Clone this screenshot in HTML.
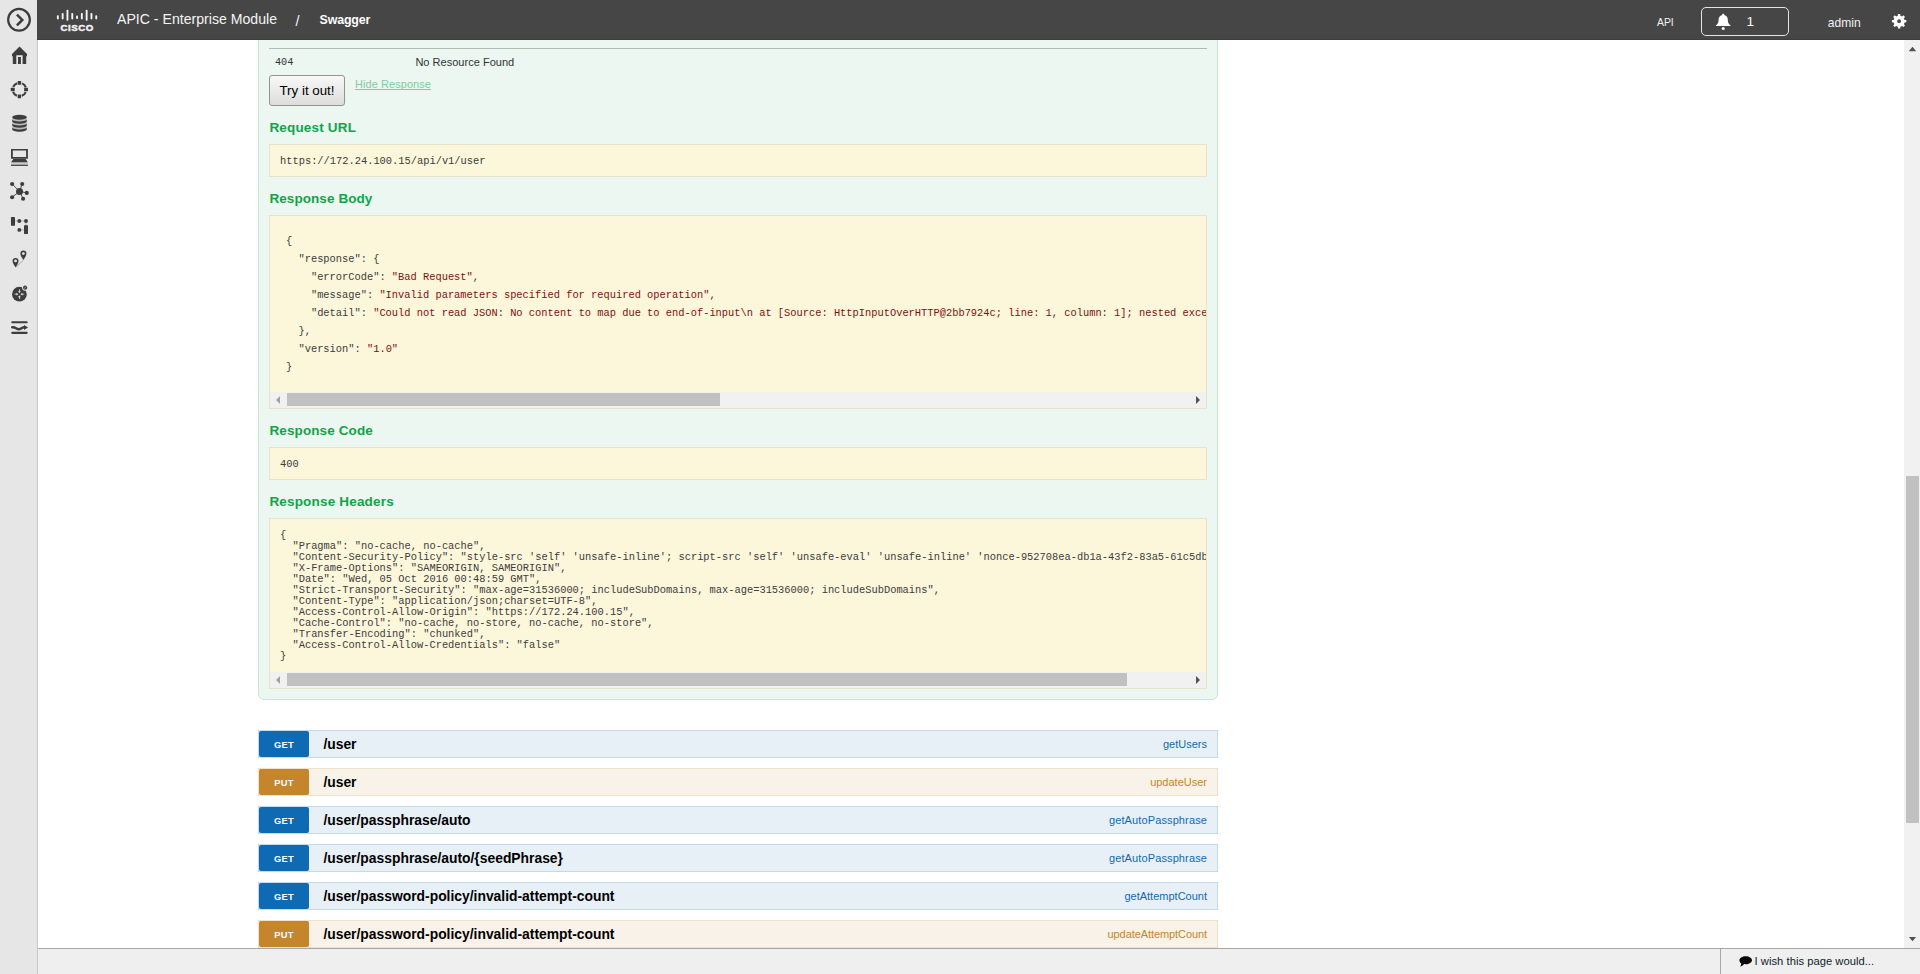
<!DOCTYPE html>
<html lang="en">
<head>
<meta charset="utf-8">
<title>APIC - Enterprise Module / Swagger</title>
<style>
*{box-sizing:border-box}
html,body{margin:0;padding:0}
body{width:1920px;height:974px;overflow:hidden;position:relative;background:#fff;font-family:"Liberation Sans",Arial,sans-serif;color:#000}
.abs{position:absolute}
/* sidebar */
#side{position:absolute;left:0;top:0;width:38px;height:974px;background:#e6e6e6;border-right:1px solid #c8c8c8;z-index:5}
#side svg{position:absolute;left:0;top:0}
/* header */
#hdr{position:absolute;left:37px;top:0;width:1883px;height:40px;background:#464646;border-bottom:1px solid #3e3e3e;z-index:6;color:#fff}
#hdr .t{position:absolute;white-space:nowrap;line-height:1}
/* footer */
#ftr{position:absolute;left:38px;top:948px;width:1882px;height:26px;background:#efefef;border-top:1px solid #a6a6a6;z-index:6}
#wish{position:absolute;left:1682px;top:0;width:199px;height:25px;border-left:1px solid #a6a6a6}
/* scrollbar */
#sb{position:absolute;left:1904px;top:40px;width:16px;height:908px;background:#f1f1f1;z-index:4}
#sb .th{position:absolute;left:2px;top:436px;width:13px;height:347px;background:#c1c1c1}
/* swagger */
.mono{font-family:"Liberation Mono","DejaVu Sans Mono",monospace}
#post{position:absolute;left:258px;top:20px;width:960px;height:680px;background:#ebf7f0;border:1px solid #c8e6d4;border-radius:0 0 6px 6px}
.h4{position:absolute;left:269.4px;color:#10a54a;font-weight:bold;font-size:13.5px;line-height:1;white-space:nowrap}
.box{position:absolute;left:269px;width:938px;background:#fcf6db;border:1px solid #e7e3cb;overflow:hidden}
.box pre{margin:0;position:absolute;white-space:pre;color:#3c3c3c}
.s{color:#801010}
.hs{position:absolute;left:0;height:16px;width:936px;background:#f1f1f1}
.hs .th{position:absolute;top:1px;height:13px;background:#c1c1c1}
.hs i{position:absolute;top:3.6px;width:0;height:0;border:4.2px solid transparent}
.hs i.l{left:1.6px;border-right:4.9px solid #a3a3a3}
.hs i.r{left:925.6px;border-left:4.9px solid #505050}
/* operations */
.op{position:absolute;left:258px;width:960px;height:28px;border:1px solid #c3d9ec;background:#e7f0f7}
.op.put{border-color:#f0e0ca;background:#f9f2e9}
.op .m{position:absolute;left:0;top:0;width:50px;height:26px;background:#0f6ab4;color:#fff;border-radius:2px;text-align:center;font-weight:bold;font-size:9.3px;letter-spacing:0.3px;line-height:29px;overflow:hidden}
.op.put .m{background:#c5862b}
.op .p{position:absolute;left:64.4px;top:0;line-height:26px;font-size:13.87px;font-weight:bold;color:#000;white-space:nowrap}
.op .o{position:absolute;right:10px;top:0;line-height:26px;font-size:11px;color:#0f6ab4;white-space:nowrap}
.op.put .o{color:#c5862b}
</style>
</head>
<body>

<!-- SWAGGER CONTENT -->
<div id="post"></div>
<div class="abs" style="left:269px;top:48px;width:938px;height:1px;background:#b0bcb5"></div>
<div class="abs mono" style="left:275px;top:56px;font-size:10.2px;line-height:13px;color:#333">404</div>
<div class="abs" style="left:415.4px;top:56px;font-size:11.05px;line-height:13px;color:#333;white-space:nowrap">No Resource Found</div>

<div class="abs" id="try" style="left:269px;top:75px;width:76px;height:31px;border:1px solid #939393;border-radius:3px;background:linear-gradient(#f8f8f8,#dddddd);font-size:13.33px;line-height:29px;text-align:center;color:#000">Try it out!</div>
<div class="abs" id="hide" style="left:355px;top:78px;font-size:10.9px;letter-spacing:0.12px;line-height:12px;color:#7fcba4;text-decoration:underline;text-decoration-skip-ink:none;white-space:nowrap">Hide Response</div>

<div class="h4" style="top:121px;letter-spacing:0.18px">Request URL</div>
<div class="box" style="top:144px;height:33px"><pre class="mono" style="left:10px;top:10px;font-size:10.395px;line-height:13px">https://172.24.100.15/api/v1/user</pre></div>

<div class="h4" style="top:192px;letter-spacing:0.08px">Response Body</div>
<div class="box" id="rb" style="top:215px;height:194px"><pre class="mono" style="left:16px;top:16px;font-size:10.395px;line-height:18px">{
  "response": {
    "errorCode": <span class="s">"Bad Request"</span>,
    "message": <span class="s">"Invalid parameters specified for required operation"</span>,
    "detail": <span class="s">"Could not read JSON: No content to map due to end-of-input\n at [Source: HttpInputOverHTTP@2bb7924c; line: 1, column: 1]; nested exception is com.fasterxml.jackson.databind.JsonMappingException"</span>
  },
  "version": <span class="s">"1.0"</span>
}</pre>
<div class="hs" style="top:176px"><i class="l"></i><div class="th" style="left:17px;width:433px"></div><i class="r"></i></div>
</div>

<div class="h4" style="top:424px;letter-spacing:0.12px">Response Code</div>
<div class="box" style="top:447px;height:33px"><pre class="mono" style="left:10px;top:10px;font-size:10.395px;line-height:13px">400</pre></div>

<div class="h4" style="top:495px;letter-spacing:0.18px">Response Headers</div>
<div class="box" id="rh" style="top:518px;height:171px"><pre class="mono" style="left:10px;top:11px;font-size:10.395px;line-height:11px">{
  "Pragma": "no-cache, no-cache",
  "Content-Security-Policy": "style-src 'self' 'unsafe-inline'; script-src 'self' 'unsafe-eval' 'unsafe-inline' 'nonce-952708ea-db1a-43f2-83a5-61c5db2d1f0e'",
  "X-Frame-Options": "SAMEORIGIN, SAMEORIGIN",
  "Date": "Wed, 05 Oct 2016 00:48:59 GMT",
  "Strict-Transport-Security": "max-age=31536000; includeSubDomains, max-age=31536000; includeSubDomains",
  "Content-Type": "application/json;charset=UTF-8",
  "Access-Control-Allow-Origin": "https://172.24.100.15",
  "Cache-Control": "no-cache, no-store, no-cache, no-store",
  "Transfer-Encoding": "chunked",
  "Access-Control-Allow-Credentials": "false"
}</pre>
<div class="hs" style="top:153px"><i class="l"></i><div class="th" style="left:17px;width:840px"></div><i class="r"></i></div>
</div>

<!-- OPERATIONS -->
<div class="op" style="top:730px"><div class="m">GET</div><div class="p">/user</div><div class="o">getUsers</div></div>
<div class="op put" style="top:768px"><div class="m">PUT</div><div class="p">/user</div><div class="o">updateUser</div></div>
<div class="op" style="top:806px"><div class="m">GET</div><div class="p">/user/passphrase/auto</div><div class="o" style="letter-spacing:0.12px">getAutoPassphrase</div></div>
<div class="op" style="top:844px"><div class="m">GET</div><div class="p">/user/passphrase/auto/{seedPhrase}</div><div class="o" style="letter-spacing:0.12px">getAutoPassphrase</div></div>
<div class="op" style="top:882px"><div class="m">GET</div><div class="p">/user/password-policy/invalid-attempt-count</div><div class="o">getAttemptCount</div></div>
<div class="op put" style="top:920px"><div class="m">PUT</div><div class="p">/user/password-policy/invalid-attempt-count</div><div class="o" style="letter-spacing:-0.08px">updateAttemptCount</div></div>

<!-- SCROLLBAR -->
<div id="sb"><div class="th"></div><svg class="abs" style="left:0;top:0" width="16" height="908" viewBox="0 0 16 908"><path d="M8.5 6.8L12.2 11.2L4.8 11.2Z" fill="#505050"/><path d="M4.9 897.1L12.1 897.1L8.5 901.2Z" fill="#505050"/></svg></div>

<!-- SIDEBAR -->
<div id="side"><svg width="37" height="974" viewBox="0 0 37 974">
<g fill="#3d3d3d" stroke="none">
<!-- expand chevron -->
<circle cx="19" cy="19.8" r="10.85" fill="none" stroke="#3d3d3d" stroke-width="2.2"/>
<polyline points="16.9,14.6 22.3,19.95 16.9,25.3" fill="none" stroke="#3d3d3d" stroke-width="2.5" stroke-linejoin="miter"/>
<!-- home -->
<path fill-rule="evenodd" d="M19.55 46.4L27 54.1L27 56.2L26.2 56.2L26.2 63.9L12.8 63.9L12.8 56.2L12 56.2L12 54.1Z M16.3 55.2L16.3 63.9L18 63.9L18 57.1L20.9 57.1L20.9 63.9L22.6 63.9L22.6 55.2Z"/>
<!-- target ring -->
<circle cx="19.4" cy="89.55" r="6.75" fill="none" stroke="#3d3d3d" stroke-width="2.1" stroke-dasharray="5.5 5.1" stroke-dashoffset="-2.55"/>
<rect x="17.65" y="80.9" width="3.5" height="3.8" rx=".4"/>
<rect x="17.65" y="94.4" width="3.5" height="3.8" rx=".4"/>
<rect x="10.8" y="87.75" width="3.9" height="3.6" rx=".4"/>
<rect x="24.1" y="87.75" width="3.9" height="3.6" rx=".4"/>
<!-- database -->
<path d="M12.4 117.25L12.4 129.2A7.1 2.4 0 0 0 26.6 129.2L26.6 117.25Z" fill="#b9b9b9"/><ellipse cx="19.5" cy="117.25" rx="7.3" ry="2.6"/><path d="M12.2 119.2A7.3 2.3 0 0 0 26.8 119.2L26.8 121.2A7.3 2.5 0 0 1 12.2 121.2Z"/><path d="M12.2 123.2A7.3 2.3 0 0 0 26.8 123.2L26.8 125.2A7.3 2.5 0 0 1 12.2 125.2Z"/><path d="M12.2 127.2A7.3 2.3 0 0 0 26.8 127.2L26.8 129.2A7.3 2.5 0 0 1 12.2 129.2Z"/>

<!-- laptop -->
<path fill-rule="evenodd" d="M11 149L27.9 149L27.9 158.8L11 158.8Z M12.8 150.5L12.8 157.1L26.1 157.1L26.1 150.5Z"/>
<path d="M13.4 158.8L25.5 158.8L27.9 162.5L11 162.5Z"/>
<rect x="11" y="162.6" width="16.9" height="2.1" fill="#c9c9c9"/>
<rect x="11" y="164.7" width="16.9" height="1.2"/>
<!-- hub -->
<g stroke="#3d3d3d" stroke-width=".9">
<line x1="19.55" y1="191.4" x2="12.1" y2="183.95"/><line x1="19.55" y1="191.4" x2="22.2" y2="183.95"/><line x1="19.55" y1="191.4" x2="26.8" y2="192.9"/><line x1="19.55" y1="191.4" x2="23.1" y2="198.7"/><line x1="19.55" y1="191.4" x2="12.1" y2="197.25"/>
</g>
<circle cx="19.55" cy="191.4" r="3.5"/>
<circle cx="12.1" cy="183.95" r="2.05"/><circle cx="22.2" cy="183.95" r="2.05"/><circle cx="26.8" cy="192.9" r="2.05"/><circle cx="23.1" cy="198.7" r="2.05"/><circle cx="12.1" cy="197.25" r="2.05"/>
<!-- tree -->
<g stroke="#b4b4b4" stroke-width="1.1"><line x1="15" y1="221" x2="26" y2="221"/><line x1="26" y1="221" x2="26" y2="225.5"/><line x1="19.3" y1="229.9" x2="24" y2="229.9"/></g>
<rect x="10.95" y="217" width="4.05" height="8.7" rx=".4"/>
<rect x="24" y="225.2" width="4" height="8.7" rx=".4"/>
<circle cx="19.3" cy="221" r="1.95"/><circle cx="26" cy="221" r="1.95"/><circle cx="19.3" cy="229.9" r="1.95"/>
<!-- path pins -->
<line x1="16" y1="267" x2="23.2" y2="260.4" stroke="#8c8c8c" stroke-width=".7"/>
<path fill-rule="evenodd" d="M15.55 267.4C14.25 265.2 12.55 263.0 12.55 260.9A3 3 0 1 1 18.55 260.9C18.55 263.0 16.85 265.2 15.55 267.4ZM17.0 260.9A1.45 1.45 0 1 0 14.100000000000001 260.9A1.45 1.45 0 1 0 17.0 260.9Z"/>
<path fill-rule="evenodd" d="M23.4 260.1C22.099999999999998 257.9 20.4 255.7 20.4 253.6A3 3 0 1 1 26.4 253.6C26.4 255.7 24.7 257.9 23.4 260.1ZM24.849999999999998 253.6A1.45 1.45 0 1 0 21.95 253.6A1.45 1.45 0 1 0 24.849999999999998 253.6Z"/>
<!-- cookie -->
<circle cx="19.4" cy="294.2" r="7.35"/>
<circle cx="25.1" cy="287.7" r="3" fill="#e6e6e6"/>
<circle cx="25.1" cy="287.7" r="2.1"/>
<line x1="24.2" y1="288.7" x2="26" y2="286.7" stroke="#d0d0d0" stroke-width=".7"/>
<g fill="#e2e2e2">
<path d="M19.4 293.2L18 291.2L19 291.2L19 289.3L19.8 289.3L19.8 291.2L20.8 291.2Z"/>
<path d="M19.4 295.2L18 297.2L19 297.2L19 299.1L19.8 299.1L19.8 297.2L20.8 297.2Z"/>
<path d="M18.4 294.2L16.4 292.8L16.4 293.8L14.5 293.8L14.5 294.6L16.4 294.6L16.4 295.6Z"/>
<path d="M20.4 294.2L22.4 292.8L22.4 293.8L24.3 293.8L24.3 294.6L22.4 294.6L22.4 295.6Z"/>
</g>
<!-- swap -->
<g fill="none" stroke="#3d3d3d" stroke-width="2.2" stroke-linecap="round">
<line x1="12.3" y1="322.25" x2="26.6" y2="322.25"/>
<line x1="12.3" y1="332.85" x2="26.6" y2="332.85"/>
<path d="M12.2 327.3C15.5 326.8 16.2 329.3 18.8 329.3S22 326.9 25 327.3" stroke-width="2.4"/>
</g>
<path d="M24 324.9L28.1 327.4L24 329.9Z"/>
</g>
</svg></div>

<!-- HEADER -->
<div id="hdr">
<svg class="abs" id="hdricons" style="left:0;top:0" width="1883" height="40" viewBox="37 0 1883 40">
<!-- cisco logo bars -->
<g fill="#f4f4f4">
<rect x="56.9" y="15.2" width="1.9" height="4.2" rx=".8"/>
<rect x="61.7" y="13" width="1.9" height="6.4" rx=".8"/>
<rect x="66.5" y="9.8" width="1.9" height="11" rx=".8"/>
<rect x="71.3" y="13" width="1.9" height="6.4" rx=".8"/>
<rect x="76.1" y="15.4" width="1.9" height="3.6" rx=".8"/>
<rect x="80.9" y="13" width="1.9" height="6.4" rx=".8"/>
<rect x="85.7" y="9.8" width="1.9" height="11" rx=".8"/>
<rect x="90.5" y="13" width="1.9" height="6.4" rx=".8"/>
<rect x="95.3" y="15.2" width="1.9" height="4.2" rx=".8"/>
</g>
<text x="77.1" y="31" text-anchor="middle" font-family="Liberation Sans, Arial, sans-serif" font-weight="bold" font-size="9.7" letter-spacing="0.55" fill="#f4f4f4" stroke="#f4f4f4" stroke-width="0.45">CISCO</text>
<!-- bell -->
<g fill="#fff">
<path d="M1723.2 13.8c.7 0 1.1.5 1.1 1.1 2.3.6 3.5 2.4 3.5 4.8 0 2.800 1 4.600 2.800 5.800 0 .4-.2.600-.6.600h-13.600c-.4 0-.6-.2-.6-.6 1.800-1.200 2.800-3 2.800-5.800 0-2.400 1.200-4.200 3.500-4.800 0-.6.400-1.100 1.100-1.100z"/>
<circle cx="1723.2" cy="28.5" r="1.55"/>
</g>
<!-- gear -->
<g transform="translate(1899.1 21.2)"><path fill="#fff" fill-rule="evenodd" d="M-1.31 -5.45L-1.14 -7.21L1.14 -7.21L1.31 -5.45L2.93 -4.77L4.29 -5.91L5.91 -4.29L4.77 -2.93L5.45 -1.31L7.21 -1.14L7.21 1.14L5.45 1.31L4.77 2.93L5.91 4.29L4.29 5.91L2.93 4.77L1.31 5.45L1.14 7.21L-1.14 7.21L-1.31 5.45L-2.93 4.77L-4.29 5.91L-5.91 4.29L-4.77 2.93L-5.45 1.31L-7.21 1.14L-7.21 -1.14L-5.45 -1.31L-4.77 -2.93L-5.91 -4.29L-4.29 -5.91L-2.93 -4.77Z M1.9 0A1.9 1.9 0 1 0 -1.9 0A1.9 1.9 0 1 0 1.9 0Z"/></g>
</svg>
<div class="t" id="h1" style="left:79.6px;top:11px;font-size:15.1px;transform:scaleX(0.935);transform-origin:0 0;color:#f4f4f4">APIC - Enterprise Module</div>
<div class="t" id="h2" style="left:258.6px;top:14px;font-size:14.5px;color:#f2f2f2">/</div>
<div class="t" id="h3" style="left:282.6px;top:14px;font-size:12.4px;font-weight:bold;letter-spacing:-0.17px">Swagger</div>
<div class="t" id="h4" style="left:1620px;top:18px;font-size:10.395px;color:#f2f2f2">API</div>
<div class="abs" id="bellbox" style="left:1664px;top:7px;width:88px;height:29px;border:1px solid #e4e4e4;border-radius:5px"></div>
<div class="t" id="h5" style="left:1709.5px;top:15px;font-size:13.6px">1</div>
<div class="t" id="h6" style="left:1790.8px;top:17px;font-size:12.05px;color:#f2f2f2">admin</div>
</div>

<!-- FOOTER -->
<div id="ftr"><div id="wish"><svg class="abs" style="left:15.7px;top:5px" width="18" height="16" viewBox="0.6 0 18 16"><path d="M9.3 2.2c3.5 0 6.300 1.750 6.300 4 0 2.250-2.800 4-6.300 4-.55 0-1.100-.05-1.600-.13C6.600 11.300 5.100 12.400 3.600 12.700c.75-.9 1.200-2 1.300-3.200C3.700 8.700 3 7.500 3 6.200c0-2.250 2.800-4 6.300-4z" fill="#0a0a0a"/></svg><div class="abs" id="wtxt" style="left:33.6px;top:6px;font-size:11.2px;letter-spacing:0.03px;line-height:13px;color:#0f1c2b;white-space:nowrap">I wish this page would...</div></div></div>

</body>
</html>
